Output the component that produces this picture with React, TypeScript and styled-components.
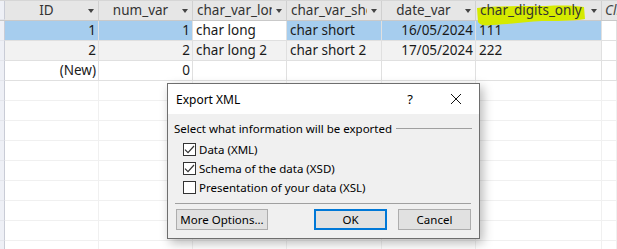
import React from 'react'
import styled, { createGlobalStyle } from 'styled-components'

type Col = { name: string; align: 'left' | 'right'; center: boolean }

const columns: Col[] = [
  { name: 'ID', align: 'right', center: true },
  { name: 'num_var', align: 'right', center: true },
  { name: 'char_var_long', align: 'left', center: false },
  { name: 'char_var_short', align: 'left', center: false },
  { name: 'date_var', align: 'right', center: true },
  { name: 'char_digits_only', align: 'left', center: false },
]

const rows: { cells: string[]; tone: 'selected' | 'alt' | 'plain' }[] = [
  { cells: ['1', '1', 'char long', 'char short', '16/05/2024', '111'], tone: 'selected' },
  { cells: ['2', '2', 'char long 2', 'char short 2', '17/05/2024', '222'], tone: 'alt' },
  { cells: ['(New)', '0', '', '', '', ''], tone: 'plain' },
]

// selector + 6 fields + "Click to Add"
const TEMPLATE = '5px 94px 94px 94px 95px 94px 126px 1fr'

const GlobalStyle = createGlobalStyle`
  html, body {
    margin: 0;
    padding: 0;
    background: #ffffff;
    overflow: hidden;
  }
  body {
    font-family: "Noto Sans", "Open Sans", sans-serif;
  }
`

const Check = () => (
  <svg width="11" height="11" viewBox="0 0 11 11">
    <polyline points="1,5.6 4,8.6 10,2" fill="none" stroke="#333" strokeWidth="1.2" />
  </svg>
)

const Highlight = () => (
  <_Marker width="112" height="24" viewBox="0 0 112 24">
    <path
      d="M1 3 C12 1 40 1 70 1 C90 0 100 1 108 2 L109 14 C96 16 80 16 66 16 C48 17 34 19 16 20 C8 21 4 20 2 17 Z"
      fill="#d5ea00"
    />
  </_Marker>
)

const App = () => {
  return (
    <_Page>
      <GlobalStyle />
      <_Grid>
        <_Header>
          <_Selector />
          {columns.map((c) => (
            <_HeadCell key={c.name}>
              {c.name === 'char_digits_only' && <Highlight />}
              <_HeadText $center={c.center}>{c.name}</_HeadText>
              <_Arrow />
            </_HeadCell>
          ))}
          <_AddCell>Click to Add</_AddCell>
        </_Header>
        {rows.map((r, i) => (
          <_Row key={i}>
            <_Selector />
            {r.cells.map((v, j) => (
              <_Cell
                key={j}
                $align={columns[j].align}
                $tone={r.tone === 'selected' && j === 2 ? 'plain' : r.tone}
              >
                {v}
              </_Cell>
            ))}
            <_Cell $align="left" $tone="plain" />
          </_Row>
        ))}
        {Array.from({ length: 9 }).map((_, i) => (
          <_Row key={'e' + i}>
            <_Selector />
            {Array.from({ length: 7 }).map((__, j) => (
              <_EmptyCell key={j} />
            ))}
          </_Row>
        ))}
      </_Grid>

      <_Dialog>
        <_TitleBar>
          <_Title>Export XML</_Title>
          <_TitleButton>?</_TitleButton>
          <_TitleButton>
            <svg width="12" height="12" viewBox="0 0 12 12">
              <path d="M1 1 L11 11 M11 1 L1 11" stroke="#111" strokeWidth="1" />
            </svg>
          </_TitleButton>
        </_TitleBar>
        <_Body>
          <_GroupLabel>
            <span>Select what information will be exported</span>
            <_Rule />
          </_GroupLabel>
          <_Options>
            <_Option>
              <_Box>
                <Check />
              </_Box>
              Data (XML)
            </_Option>
            <_Option>
              <_Box>
                <Check />
              </_Box>
              Schema of the data (XSD)
            </_Option>
            <_Option>
              <_Box />
              Presentation of your data (XSL)
            </_Option>
          </_Options>
          <_Separator />
          <_Buttons>
            <_Button $width={92}>More Options...</_Button>
            <_Spacer />
            <_Button $width={73} $primary>
              OK
            </_Button>
            <_Button $width={73}>Cancel</_Button>
          </_Buttons>
        </_Body>
      </_Dialog>
    </_Page>
  )
}

export default App

const _Page = styled.div`
  position: relative;
  width: 617px;
  height: 249px;
  overflow: hidden;
  background: #fff;
`

const _Grid = styled.div`
  display: flex;
  flex-direction: column;
  font-size: 13.5px;
  color: #1a1a1a;
`

const _Header = styled.div`
  display: grid;
  grid-template-columns: ${TEMPLATE};
  height: 21px;
  background: #e6e6e6;
  border-top: 1px solid #d6d6d6;
  box-sizing: border-box;
  border-bottom: 1px solid #c9c9c9;
`

const _Row = styled.div`
  display: grid;
  grid-template-columns: ${TEMPLATE};
  height: 20px;
`

const _Selector = styled.div`
  background: #eef0f6;
  border-right: 1px solid #c9ccd6;
  border-bottom: 1px solid #e4e6ec;
`

const _HeadCell = styled.div`
  position: relative;
  min-width: 0;
  display: flex;
  align-items: center;
  border-right: 1px solid #d0d0d0;
  padding: 0 4px 0 4px;
  color: #333;
`

const _HeadText = styled.span<{ $center: boolean }>`
  position: relative;
  flex: 1;
  min-width: 0;
  text-align: ${(p) => (p.$center ? 'center' : 'left')};
  white-space: nowrap;
  overflow: hidden;
  line-height: 19px;
`

const _Marker = styled.svg`
  position: absolute;
  left: 0;
  top: 4px;
`

const _Arrow = styled.span`
  flex: none;
  margin-left: 4px;
  width: 0;
  height: 0;
  border-left: 3.5px solid transparent;
  border-right: 3.5px solid transparent;
  border-top: 4px solid #444;
  margin-top: 1px;
`

const _AddCell = styled.div`
  padding-left: 3px;
  font-style: italic;
  color: #444;
  white-space: nowrap;
  overflow: hidden;
  line-height: 19px;
`

const _Cell = styled.div<{ $align: 'left' | 'right'; $tone: 'selected' | 'alt' | 'plain' }>`
  background: ${(p) => (p.$tone === 'selected' ? '#a6cdee' : p.$tone === 'alt' ? '#f2f2f2' : '#ffffff')};
  border-right: 1px solid #e0e0e0;
  border-bottom: 1px solid #e0e0e0;
  text-align: ${(p) => p.$align};
  padding: 0 2px 0 3px;
  line-height: 19px;
  white-space: nowrap;
  overflow: hidden;
`

const _EmptyCell = styled.div`
  border-right: 1px solid #f0f0f0;
  border-bottom: 1px solid #f0f0f0;
`

const _Dialog = styled.div`
  position: absolute;
  left: 167px;
  top: 83px;
  width: 313px;
  height: 156px;
  box-sizing: border-box;
  border: 1px solid #6e6e6e;
  background: #f0f0f0;
  box-shadow: 3px 4px 10px rgba(0, 0, 0, 0.28);
  display: flex;
  flex-direction: column;
  font-size: 11.5px;
  color: #000;
`

const _TitleBar = styled.div`
  height: 30px;
  background: #fff;
  display: flex;
  align-items: center;
  padding-left: 8px;
`

const _Title = styled.div`
  flex: 1;
  font-size: 12px;
`

const _TitleButton = styled.div`
  width: 46px;
  height: 30px;
  display: flex;
  align-items: center;
  justify-content: center;
  font-size: 13px;
`

const _Body = styled.div`
  flex: 1;
  padding: 6px 7px 0 6px;
  display: flex;
  flex-direction: column;
`

const _GroupLabel = styled.div`
  display: flex;
  align-items: center;
  gap: 4px;
  height: 16px;
  white-space: nowrap;
`

const _Rule = styled.div`
  flex: 1;
  height: 1px;
  background: #a0a0a0;
`

const _Options = styled.div`
  display: flex;
  flex-direction: column;
  padding: 4px 0 0 9px;
`

const _Option = styled.div`
  display: flex;
  align-items: center;
  height: 19px;
  gap: 3px;
`

const _Box = styled.div`
  width: 13px;
  height: 13px;
  box-sizing: border-box;
  border: 1px solid #333;
  background: #fff;
  display: flex;
  align-items: center;
  justify-content: center;
`

const _Separator = styled.div`
  height: 1px;
  background: #a0a0a0;
  margin: 6px 1px 0 1px;
`

const _Buttons = styled.div`
  display: flex;
  gap: 11px;
  padding: 5px 1px 0 2px;
`

const _Spacer = styled.div`
  flex: 1;
`

const _Button = styled.div<{ $width: number; $primary?: boolean }>`
  width: ${(p) => p.$width}px;
  height: 21px;
  box-sizing: border-box;
  border: ${(p) => (p.$primary ? '2px solid #0078d7' : '1px solid #adadad')};
  background: #e1e1e1;
  display: flex;
  align-items: center;
  justify-content: center;
`
